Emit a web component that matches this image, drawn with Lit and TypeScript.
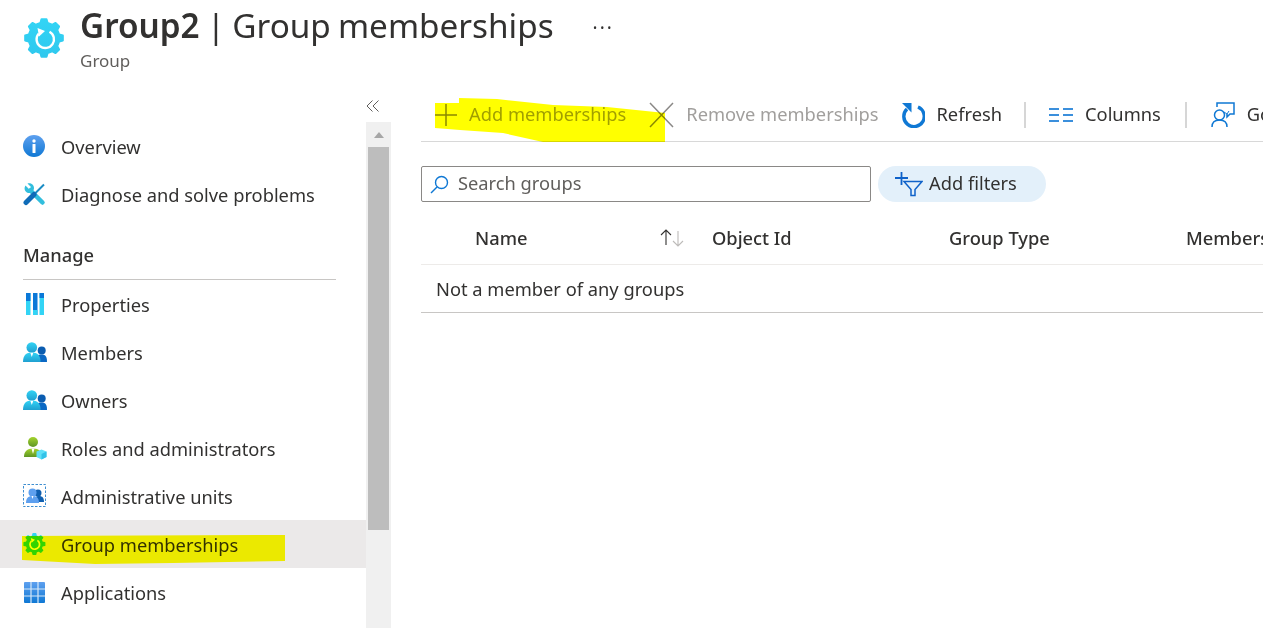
import { LitElement, html, css, svg } from "lit";
import { customElement } from "lit/decorators.js";

function gearPath(cx: number, cy: number, R: number, r: number, teeth: number) {
  const pts: string[] = [];
  const step = (Math.PI * 2) / teeth;
  for (let i = 0; i < teeth; i++) {
    const a = -Math.PI / 2 + i * step;
    const w = step * 0.17;
    const w2 = step * 0.3;
    const p = (ang: number, rad: number) =>
      `${(cx + Math.cos(ang) * rad).toFixed(2)} ${(cy + Math.sin(ang) * rad).toFixed(2)}`;
    pts.push(p(a - w2, r), p(a - w, R), p(a + w, R), p(a + w2, r));
  }
  return "M" + pts.join("L") + "Z";
}

const gear = (size: number, id: string) => svg`
  <svg width=${size} height=${size} viewBox="0 0 40 40">
    <defs><linearGradient id=${id} x1="0" y1="0" x2="0" y2="1"><stop offset="0" stop-color="#32d4f5"/><stop offset="1" stop-color="#2fc8ee"/></linearGradient></defs>
    <path d=${gearPath(20, 20, 19, 15.5, 8)} fill="url(#${id})" stroke="url(#${id})" stroke-width="2" stroke-linejoin="round"/>
    <path d="M14.800 15.500A8.700 8.700 0 1 0 25.500 13.700" fill="none" stroke="#fff" stroke-width="2.400"/>
    <path d="M13.500 10L21 13L15 18.500Z" fill="#fff"/>
  </svg>`;

const grad = (id: string, light: string, dark: string) => svg`
  <defs><linearGradient id=${id} x1="0" y1="0" x2="0" y2="1"><stop offset="0" stop-color=${light}/><stop offset="1" stop-color=${dark}/></linearGradient></defs>`;

const people = (id: string) => svg`
  <svg width="24" height="24" viewBox="0 0 24 24">
    ${grad(id, "#32d4f5", "#1f9fd0")}
    <circle cx="18.700" cy="10.500" r="4" fill="#0a5cb0"/>
    <path d="M12 22c0-5 2-7.500 6.500-7.500s5.500 2.500 5.500 7.500z" fill="#0a68c4"/>
    <circle cx="8.800" cy="7.500" r="5.300" fill="url(#${id})"/>
    <path d="M0 22c0-6.500 3-9.500 8.800-9.500s8.800 3 8.800 9.500z" fill="url(#${id})"/>
    <path d="M7.300 12.800h3L8.800 17z" fill="#fff"/>
  </svg>`;

const icons: Record<string, unknown> = {
  overview: svg`<svg width="24" height="24" viewBox="0 0 24 24">
    ${grad("ov", "#5ea0ef", "#0f78d4")}
    <circle cx="11" cy="12" r="11" fill="url(#ov)"/>
    <circle cx="11" cy="7" r="1.700" fill="#fff"/><rect x="9.500" y="10" width="3" height="9" rx=".5" fill="#fff"/></svg>`,
  diagnose: svg`<svg width="24" height="24" viewBox="0 0 24 24">
    <path d="M2.500 3.500L6 7l2-2-3.500-3.500C7.500 .5 11 2.500 11 6c0 3-3 5.500-6 5C2 10 .5 6.500 2.500 3.500z" fill="#32bedd"/>
    <path d="M7.500 8.500L19.500 20.500" stroke="#32bedd" stroke-width="4.500" stroke-linecap="round"/>
    <path d="M11 12.500L21 2.500" stroke="#1a8cc4" stroke-width="2"/>
    <path d="M3 20.500L11 12.500" stroke="#0f6cb8" stroke-width="5" stroke-linecap="round"/></svg>`,
  properties: svg`<svg width="24" height="24" viewBox="0 0 24 24">
    <rect x="3" y="1" width="4.500" height="22" fill="#32d4f5"/><rect x="3" y="1" width="4.500" height="8" fill="#0a78d8"/>
    <rect x="10" y="1" width="4.500" height="22" fill="#0a78d8"/><rect x="10" y="18" width="4.500" height="5" fill="#32d4f5"/>
    <rect x="16.500" y="1" width="4.500" height="22" fill="#32d4f5"/><rect x="16.500" y="1" width="4.500" height="5" fill="#0a78d8"/></svg>`,
  members: people("pm"),
  owners: people("po"),
  roles: svg`<svg width="24" height="24" viewBox="0 0 24 24">
    ${grad("rg", "#a4d42e", "#5e9624")}
    <circle cx="10" cy="6" r="5" fill="url(#rg)"/>
    <path d="M1 21c0-5.500 3-8.500 9-8.500s9 3 9 8.500z" fill="url(#rg)"/>
    <path d="M8.500 12.500h3L10 18z" fill="#fff"/>
    <path d="M18.500 13.500l5 2v5.500l-5 2.500-5-2.500v-5.500z" fill="#5fe0f7"/><path d="M18.500 18v5.500l5-2.500v-5.500z" fill="#32c2e8"/></svg>`,
  admin: svg`<svg width="24" height="24" viewBox="0 0 24 24">
    <rect x=".5" y=".5" width="22" height="22" fill="none" stroke="#3e8ed0" stroke-dasharray="2.500 1.500"/>
    <circle cx="15" cy="9" r="3.500" fill="#0f5fb0"/><path d="M11 18c0-4 1.500-6 5-6s5 2 5 6z" fill="#0f5fb0"/>
    <circle cx="9.500" cy="8.500" r="4" fill="#5ea0ef"/><path d="M3 19c0-4.500 2-7 6.500-7s6.500 2.500 6.500 7z" fill="#5ea0ef"/><path d="M8.500 12h2L9.500 15z" fill="#fff"/></svg>`,
  groupm: svg`<svg width="24" height="24" viewBox="0 0 40 40">
    <path d=${gearPath(19, 20, 17.500, 13.500, 8)} fill="#32d4f5" stroke="#32d4f5" stroke-width="2" stroke-linejoin="round"/>
    <path d="M14 15A8 8 0 1 0 24 14" fill="none" stroke="#fff" stroke-width="2.800"/>
    <path d="M13 10L20 13L14.500 18Z" fill="#fff"/></svg>`,
  apps: svg`<svg width="24" height="24" viewBox="0 0 24 24">
    ${grad("ap", "#5ea0ef", "#0f78d4")}
    <rect x="1" y="2" width="21" height="21" rx="1" fill="url(#ap)"/>
    <path d="M8 2v21M15 2v21M1 9h21M1 16h21" stroke="#d6e8f8" stroke-width="1.200"/></svg>`,
};

const nav1 = [
  ["overview", "Overview"],
  ["diagnose", "Diagnose and solve problems"],
];
const nav2 = [
  ["properties", "Properties"],
  ["members", "Members"],
  ["owners", "Owners"],
  ["roles", "Roles and administrators"],
  ["admin", "Administrative units"],
  ["groupm", "Group memberships"],
  ["apps", "Applications"],
];

@customElement("app-root")
export class AppRoot extends LitElement {
  static styles = css`
    :host { display: block; width: 1263px; height: 628px; position: relative; overflow: hidden; background: #fff;
      font-family: "Noto Sans", "Open Sans", sans-serif; color: #323130; font-size: 18.300px; }
    .header { height: 88px; display: flex; box-sizing: border-box; padding: 18px 0 0 24px; }
    .hicon { width: 56px; flex: none; }
    .htitles { display: flex; flex-direction: column; }
    .hline { display: flex; align-items: center; height: 24px; margin-top: -5px; }
    .title { font-size: 33.300px; line-height: 24px; white-space: nowrap; word-spacing: -1.500px; }
    .title b { font-weight: 600; }
    .dots { font-size: 19px; margin-left: 39px; line-height: 14px; letter-spacing: 2px; padding-top: 6px; }
    .sub { color: #605e5c; font-size: 17px; line-height: 24px; margin-top: 12px; }
    .body { display: flex; height: 540px; }
    .side { width: 366px; flex: none; padding-top: 34px; box-sizing: border-box; }
    .item { height: 48px; display: flex; align-items: center; padding-left: 23px; gap: 14px; white-space: nowrap; }
    .item span { padding-top: 1px; }
    .item svg { display: block; flex: none; }
    .item.sel { background: #ebe9e9; }
    .manage { height: 62px; box-sizing: border-box; margin: 0 30px 0 23px; padding-top: 24px; font-weight: 500; line-height: 26px; border-bottom: 1px solid #c8c6c4; }
    .sbcol { width: 25px; flex: none; display: flex; flex-direction: column; }
    .collapse { height: 34px; display: flex; align-items: center; box-sizing: border-box; padding-top: 2px; }
    .track { flex: 1; background: #f0f0f0; display: flex; flex-direction: column; padding: 0 2px; }
    .up { height: 25px; display: flex; align-items: center; justify-content: center; }
    .tri { width: 0; height: 0; border-left: 5.500px solid transparent; border-right: 5.500px solid transparent; border-bottom: 6px solid #a6a6a6; }
    .thumb { height: 383px; background: #bdbdbd; }
    .main { flex: 1; min-width: 0; padding-left: 30px; overflow: hidden; }
    .toolbar { height: 54px; display: flex; align-items: center; border-bottom: 1px solid #d8d8d8; white-space: nowrap; box-sizing: border-box; padding-left: 14px; }
    .tool { display: flex; align-items: center; gap: 12px; }
    .tool span { padding-bottom: 3px; }
    .tool svg { display: block; flex: none; }
    .tool.off { color: #a19f9d; }
    .g1 { margin-left: 23px; }
    .g2 { margin-left: 22px; }
    .tsep { width: 2px; height: 26px; background: #d6d6d6; margin: 0 24px; flex: none; }
    .tsep.first { margin: 0 23px 0 22px; }
    .filters { display: flex; gap: 7px; margin-top: 24px; }
    .filters span { padding-bottom: 3px; }
    .search { width: 450px; height: 36px; box-sizing: border-box; border: 1px solid #8a8886; border-radius: 2px; display: flex; align-items: center; padding-left: 8px; gap: 9px; color: #605e5c; }
    .pill { width: 168px; height: 36px; box-sizing: border-box; border-radius: 18px; background: #e3f0fa; display: flex; align-items: center; padding-left: 16px; gap: 6px; }
    .thead { display: grid; grid-template-columns: 291px 237px 237px 237px; height: 50px; margin-top: 13px; align-items: center; border-bottom: 1px solid #edebe9; box-sizing: border-box; font-weight: 500; white-space: nowrap; padding-bottom: 4px; }
    .th { display: flex; align-items: center; }
    .th.name { padding-left: 54px; justify-content: space-between; padding-right: 28px; box-sizing: border-box; }
    .sort { display: flex; }
    .down { margin-top: 2px; }
    .empty { height: 48px; box-sizing: border-box; border-bottom: 1px solid #c8c6c4; display: flex; align-items: center; padding-left: 15px; }
    .marks { position: absolute; left: 0; top: 0; mix-blend-mode: multiply; pointer-events: none; }
  `;

  private row = ([k, label]: string[]) => html`
    <div class="item ${k === "groupm" ? "sel" : ""}">${icons[k]}<span>${label}</span></div>`;

  render() {
    return html`
      <div class="header">
        <div class="hicon">${gear(40, "hg")}</div>
        <div class="htitles">
          <div class="hline">
            <span class="title"><b>Group2</b> | Group memberships</span>
            <span class="dots">···</span>
          </div>
          <div class="sub">Group</div>
        </div>
      </div>
      <div class="body">
        <div class="side">
          ${nav1.map(this.row)}
          <div class="manage">Manage</div>
          ${nav2.map(this.row)}
        </div>
        <div class="sbcol">
          <div class="collapse">
            <svg width="14" height="12" viewBox="0 0 14 12" fill="none" stroke="#605e5c"><path d="M6.500 .5L1 6l5.500 5.500M12.500 .5L7 6l5.500 5.500"/></svg>
          </div>
          <div class="track">
            <div class="up"><div class="tri"></div></div>
            <div class="thumb"></div>
          </div>
        </div>
        <div class="main">
          <div class="toolbar">
            <div class="tool off">
              <svg width="22" height="24" viewBox="0 0 22 24" stroke="#8a8886" stroke-width="1.500"><path d="M11 1v22M0 12h22"/></svg>
              <span>Add memberships</span>
            </div>
            <div class="tool off g1">
              <svg width="25" height="26" viewBox="0 0 25 26" stroke="#8a8886" stroke-width="1.500"><path d="M1 1l23 24M24 1L1 25"/></svg>
              <span>Remove memberships</span>
            </div>
            <div class="tool g2">
              <svg width="24" height="26" viewBox="0 0 24 26" fill="none"><path d="M6 7A10.200 10.200 0 1 0 17 5" stroke="#0f78d4" stroke-width="3.400"/><path d="M1 1h9.500v9.500z" fill="#0f78d4"/></svg>
              <span>Refresh</span>
            </div>
            <div class="tsep first"></div>
            <div class="tool">
              <svg width="24" height="16" viewBox="0 0 24 16" stroke="#3b8fdc" stroke-width="2"><path d="M0 2h10M14 2h10M0 8h10M14 8h10M0 14h10M14 14h10"/></svg>
              <span>Columns</span>
            </div>
            <div class="tsep"></div>
            <div class="tool">
              <svg width="24" height="26" viewBox="0 0 24 26" fill="none" stroke="#0f78d4" stroke-width="1.500"><circle cx="8.500" cy="13" r="5"/><path d="M1 25c0-4.500 3-7 7.500-7s7.500 2.500 7.500 7M6 5V1h17v11h-4l-3 3v-3"/><path d="M13 10l3 2 2-3" stroke-width="1"/></svg>
              <span>Got feedback?</span>
            </div>
          </div>
          <div class="filters">
            <div class="search">
              <svg width="19" height="19" viewBox="0 0 19 19" fill="none" stroke="#0f78d4" stroke-width="1.400"><circle cx="11.500" cy="7.500" r="6"/><path d="M7 12L1 18"/></svg>
              <span>Search groups</span>
            </div>
            <div class="pill">
              <svg width="29" height="26" viewBox="0 0 29 26" fill="none" stroke="#0f62c9" stroke-width="1.800"><path d="M1 7h13M7.500 1v13"/><path d="M10 10.500h18l-7 8v6h-4v-6z" stroke-width="1.500"/></svg>
              <span>Add filters</span>
            </div>
          </div>
          <div class="thead">
            <div class="th name"><span>Name</span>
              <span class="sort">
                <svg width="12" height="16" viewBox="0 0 12 16" fill="none" stroke="#323130" stroke-width="1.100"><path d="M6 16V1M1 6l5-5 5 5"/></svg>
                <svg class="down" width="12" height="16" viewBox="0 0 12 16" fill="none" stroke="#bdbbb9" stroke-width="1.100"><path d="M6 0v15M1 10l5 5 5-5"/></svg>
              </span>
            </div>
            <div class="th">Object Id</div>
            <div class="th">Group Type</div>
            <div class="th">Membership Type</div>
          </div>
          <div class="empty">Not a member of any groups</div>
        </div>
      </div>
      <svg class="marks" width="1263" height="628">
        <path fill="#ffff00" d="M435 103L459 103L459 98L497 99L553 105L607 107L665 113L665 142L543 142L503 133L460 130L435 128Z"/>
        <path fill="#ffff00" d="M22 536L285 535L285 561L173 563L95 564L22 560Z"/>
      </svg>
    `;
  }
}
